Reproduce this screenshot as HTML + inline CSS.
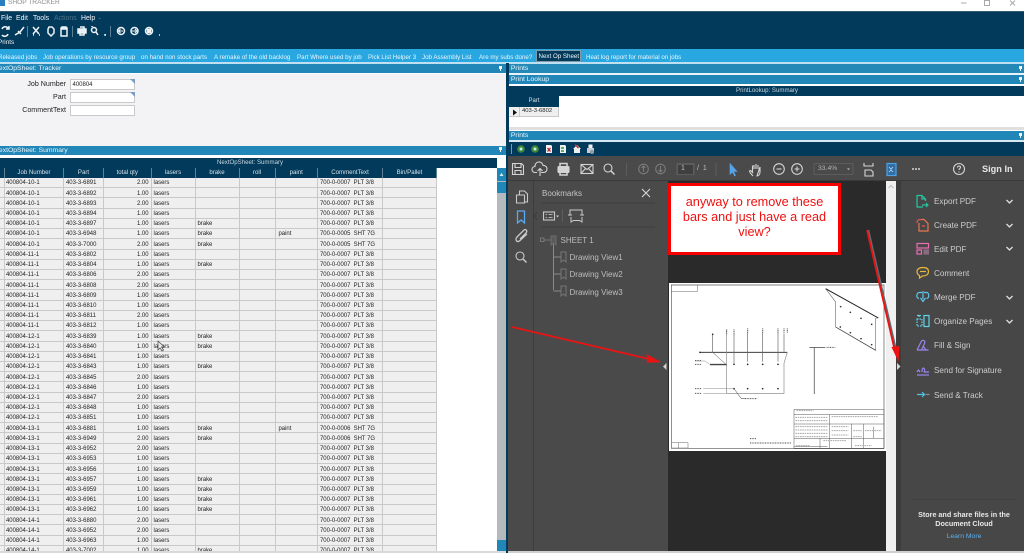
<!DOCTYPE html>
<html><head><meta charset="utf-8"><title>Shop Tracker</title>
<style>
html,body{margin:0;padding:0;background:#fff}
body{width:1024px;height:553px;overflow:hidden;position:relative;font-family:"Liberation Sans",sans-serif;filter:blur(.3px)}
.a{position:absolute}
.t{position:absolute;white-space:nowrap;line-height:1}
.hd{position:absolute;height:9px;background:#2187b8;color:#eef6fa;font-size:6.8px;line-height:9px;white-space:nowrap;overflow:hidden}
.tab{position:absolute;top:53.5px;font-size:6.2px;line-height:7px;color:#eaf6fc;white-space:nowrap}
.menu{position:absolute;top:14.5px;font-size:6.9px;line-height:8px;color:#f2f6f9;white-space:nowrap}
.th{position:absolute;top:168px;height:9.5px;background:#023a5c;color:#d4e0e8;font-size:6.1px;line-height:10px;text-align:center;border-right:1px solid #5f8196;white-space:nowrap;overflow:hidden}
#grid{position:absolute;left:0;top:178px;width:437px;height:373px;overflow:hidden;background:#c9c9c9}
.r{display:flex;height:10.23px;box-sizing:border-box;border-bottom:1px solid #c9c9c9;font-size:5.95px;line-height:9.4px;color:#222}
.r i{font-style:normal;display:block;box-sizing:border-box;background:#efefef;border-right:1px solid #c9c9c9;white-space:nowrap;overflow:hidden;padding-left:2px;padding-top:1.4px;height:9.23px}
.r i:nth-child(1){width:5px;padding-left:0}
.r i:nth-child(2){width:59px;padding-left:1px}
.r i:nth-child(3){width:40px;padding-left:2px}
.r i:nth-child(4){width:47.5px;text-align:right;padding-right:2px}
.r i:nth-child(5){width:44px}
.r i:nth-child(6){width:44px}
.r i:nth-child(7){width:36px}
.r i:nth-child(8){width:42.5px;padding-left:3px}
.r i:nth-child(9){width:65px;padding-left:2px}
.r i:nth-child(10){width:54px}
.tr{position:absolute;left:934px;font-size:8.15px;line-height:10px;color:#cdcdcd;white-space:nowrap}
.bm{position:absolute;font-size:8px;line-height:10px;color:#bdbdbd;white-space:nowrap}
</style></head>
<body>
<!-- title bar -->
<div class="a" style="left:0;top:0;width:1024px;height:11px;background:#fff"></div>
<div class="a" style="left:0;top:0;width:5px;height:6px;background:#2a7fc0"></div>
<div class="t" style="left:8px;top:0;font-size:6.6px;color:#8c8c8c">SHOP TRACKER</div>
<svg class="a" style="left:955px;top:0" width="69" height="8" fill="none" stroke="#a8a8a8"><path d="M6 3h5.500"/><rect x="29.500" y=".5" width="5" height="5"/><path d="M55 .5l5 5M60 .5l-5 5"/></svg>
<!-- dark ribbon -->
<div class="a" style="left:0;top:11px;width:1024px;height:38px;background:#023a5c;border-top:1px solid #33586f;box-sizing:border-box"></div>
<div class="menu" style="left:1px">File</div>
<div class="menu" style="left:16px">Edit</div>
<div class="menu" style="left:33px">Tools</div>
<div class="menu" style="left:54px;color:#4f7389">Actions</div>
<div class="menu" style="left:81px">Help</div>
<div class="t" style="left:99px;top:15px;font-size:6px;color:#e6eef3">.</div>
<svg class="a" style="left:0;top:25px" width="170" height="14" fill="none" stroke="#eef3f6" stroke-width="1.500">
<path d="M2 4a3.500 3.500 0 0 1 6-1l1 1M8 9a3.500 3.500 0 0 1-6 1M9 1v3H6"/>
<path d="M15 10l5-3 4-5M18 6l3 3" />
<path d="M27.500 1v11" stroke="#5e7f94" stroke-width="1"/>
<path d="M33 2l6 7M39 2l-6 7M33 10h1M39 10h1"/>
<path d="M49 2h3l2 2v4l-3 3-3-3V4z"/>
<rect x="61" y="3" width="6" height="8"/><path d="M62 2h4v2h-4z"/>
<path d="M72.500 1v11" stroke="#5e7f94" stroke-width="1"/>
<rect x="78" y="4" width="8" height="4" fill="#e8eef2"/><path d="M80 2h4v2M80 8v2h4V8"/>
<circle cx="94" cy="5" r="2.500"/><path d="M96 7l2 3M92 2v-1"/>
<path d="M105 9v1h1" />
<path d="M110.500 1v11" stroke="#5e7f94" stroke-width="1"/>
<circle cx="121" cy="6" r="3.500"/><path d="M123 6h-4M120.500 4l-2 2 2 2" stroke-width="1"/>
<circle cx="134.500" cy="6" r="3.500"/><path d="M132 6h4M135 4l2 2-2 2" stroke-width="1"/>
<circle cx="149" cy="6" r="3.500"/><rect x="147.500" y="4.500" width="3" height="3" fill="#e8eef2"/>
<path d="M159 10h1"/>
</svg>
<div class="t" style="left:-2px;top:40px;font-size:6.3px;color:#eef3f6">Prints</div>
<!-- tabs -->
<div class="a" style="left:0;top:49px;width:1024px;height:13px;background:#28a7e1"></div>
<div class="a" style="left:0;top:62px;width:1024px;height:1.500px;background:#bfe0f0"></div>
<div class="tab" style="left:-2px">Released jobs</div>
<div class="tab" style="left:43px">Job operations by resource group</div>
<div class="tab" style="left:141px">on hand non stock parts</div>
<div class="tab" style="left:214px">A remake of the old backlog</div>
<div class="tab" style="left:297px">Part Where used by job</div>
<div class="tab" style="left:368px">Pick List Helper 3</div>
<div class="tab" style="left:422px">Job Assembly List</div>
<div class="tab" style="left:479px">Are my subs done?</div>
<div class="a" style="left:536px;top:50px;width:45px;height:12px;background:#023a5c;border:1px solid #7f9aab;box-sizing:border-box"></div>
<div class="tab" style="left:538.500px;top:52.500px;color:#f0f5f8">Next Op Sheet</div>
<div class="tab" style="left:586px">Heat log report for material on jobs</div>
<!-- left panels -->
<div class="hd" style="left:0;top:64px;width:506px"><span style="margin-left:-6px">NextOpSheet: Tracker</span></div>
<div class="a" style="left:0;top:74px;width:506px;height:72px;background:#f3f3f6"></div>
<div class="t" style="right:958px;top:81px;font-size:7.100px;color:#222">Job Number</div>
<div class="t" style="right:958px;top:94px;font-size:7.100px;color:#222">Part</div>
<div class="t" style="right:958px;top:106.500px;font-size:7.100px;color:#222">CommentText</div>
<div class="a" style="left:70px;top:79px;width:65px;height:11px;background:#fff;border:1px solid #c9c9c9;box-sizing:border-box"></div>
<div class="a" style="left:70px;top:92px;width:65px;height:11px;background:#fff;border:1px solid #c9c9c9;box-sizing:border-box"></div>
<div class="a" style="left:70px;top:105px;width:65px;height:11px;background:#fff;border:1px solid #c9c9c9;box-sizing:border-box"></div>
<svg class="a" style="left:129px;top:79px" width="6" height="24"><path d="M1 0h5v5zM1 13h5v5z" fill="#7d9cc4"/></svg>
<div class="t" style="left:72.500px;top:81.500px;font-size:6px;color:#222">400804</div>
<div class="hd" style="left:0;top:146px;width:506px"><span style="margin-left:-6px">NextOpSheet: Summary</span></div>
<div class="a" style="left:0;top:155px;width:506px;height:3px;background:#fff"></div>
<div class="a" style="left:0;top:158px;width:497px;height:10px;background:#023a5c"></div>
<div class="t" style="left:217px;top:160px;font-size:6.100px;color:#c8d6de">NextOpSheet: Summary</div>
<div class="a" style="left:437px;top:168px;width:60px;height:383px;background:#fff"></div>
<div class="th" style="left:0;width:4px"></div>
<div class="th" style="left:5px;width:58px">Job Number</div>
<div class="th" style="left:64px;width:39px">Part</div>
<div class="th" style="left:104px;width:46.500px">total qty</div>
<div class="th" style="left:151.500px;width:43px">lasers</div>
<div class="th" style="left:195.500px;width:43px">brake</div>
<div class="th" style="left:239.500px;width:35px">roll</div>
<div class="th" style="left:275.500px;width:41.500px">paint</div>
<div class="th" style="left:318px;width:64px">CommentText</div>
<div class="th" style="left:383px;width:53px">Bin/Pallet</div>
<div id="grid">
<div class="r"><i></i><i>400804-10-1</i><i>403-3-6891</i><i>2.00</i><i>lasers</i><i></i><i></i><i></i><i>700-0-0007 &nbsp;PLT 3/8</i><i></i></div>
<div class="r"><i></i><i>400804-10-1</i><i>403-3-6892</i><i>1.00</i><i>lasers</i><i></i><i></i><i></i><i>700-0-0007 &nbsp;PLT 3/8</i><i></i></div>
<div class="r"><i></i><i>400804-10-1</i><i>403-3-6893</i><i>2.00</i><i>lasers</i><i></i><i></i><i></i><i>700-0-0007 &nbsp;PLT 3/8</i><i></i></div>
<div class="r"><i></i><i>400804-10-1</i><i>403-3-6894</i><i>1.00</i><i>lasers</i><i></i><i></i><i></i><i>700-0-0007 &nbsp;PLT 3/8</i><i></i></div>
<div class="r"><i></i><i>400804-10-1</i><i>403-3-6897</i><i>1.00</i><i>lasers</i><i>brake</i><i></i><i></i><i>700-0-0007 &nbsp;PLT 3/8</i><i></i></div>
<div class="r"><i></i><i>400804-10-1</i><i>403-3-6948</i><i>1.00</i><i>lasers</i><i>brake</i><i></i><i>paint</i><i>700-0-0005 &nbsp;SHT 7G</i><i></i></div>
<div class="r"><i></i><i>400804-10-1</i><i>403-3-7000</i><i>2.00</i><i>lasers</i><i>brake</i><i></i><i></i><i>700-0-0005 &nbsp;SHT 7G</i><i></i></div>
<div class="r"><i></i><i>400804-11-1</i><i>403-3-6802</i><i>1.00</i><i>lasers</i><i></i><i></i><i></i><i>700-0-0007 &nbsp;PLT 3/8</i><i></i></div>
<div class="r"><i></i><i>400804-11-1</i><i>403-3-6804</i><i>1.00</i><i>lasers</i><i>brake</i><i></i><i></i><i>700-0-0007 &nbsp;PLT 3/8</i><i></i></div>
<div class="r"><i></i><i>400804-11-1</i><i>403-3-6806</i><i>2.00</i><i>lasers</i><i></i><i></i><i></i><i>700-0-0007 &nbsp;PLT 3/8</i><i></i></div>
<div class="r"><i></i><i>400804-11-1</i><i>403-3-6808</i><i>2.00</i><i>lasers</i><i></i><i></i><i></i><i>700-0-0007 &nbsp;PLT 3/8</i><i></i></div>
<div class="r"><i></i><i>400804-11-1</i><i>403-3-6809</i><i>1.00</i><i>lasers</i><i></i><i></i><i></i><i>700-0-0007 &nbsp;PLT 3/8</i><i></i></div>
<div class="r"><i></i><i>400804-11-1</i><i>403-3-6810</i><i>1.00</i><i>lasers</i><i></i><i></i><i></i><i>700-0-0007 &nbsp;PLT 3/8</i><i></i></div>
<div class="r"><i></i><i>400804-11-1</i><i>403-3-6811</i><i>2.00</i><i>lasers</i><i></i><i></i><i></i><i>700-0-0007 &nbsp;PLT 3/8</i><i></i></div>
<div class="r"><i></i><i>400804-11-1</i><i>403-3-6812</i><i>1.00</i><i>lasers</i><i></i><i></i><i></i><i>700-0-0007 &nbsp;PLT 3/8</i><i></i></div>
<div class="r"><i></i><i>400804-12-1</i><i>403-3-6839</i><i>1.00</i><i>lasers</i><i>brake</i><i></i><i></i><i>700-0-0007 &nbsp;PLT 3/8</i><i></i></div>
<div class="r"><i></i><i>400804-12-1</i><i>403-3-6840</i><i>1.00</i><i>lasers</i><i>brake</i><i></i><i></i><i>700-0-0007 &nbsp;PLT 3/8</i><i></i></div>
<div class="r"><i></i><i>400804-12-1</i><i>403-3-6841</i><i>1.00</i><i>lasers</i><i></i><i></i><i></i><i>700-0-0007 &nbsp;PLT 3/8</i><i></i></div>
<div class="r"><i></i><i>400804-12-1</i><i>403-3-6843</i><i>1.00</i><i>lasers</i><i>brake</i><i></i><i></i><i>700-0-0007 &nbsp;PLT 3/8</i><i></i></div>
<div class="r"><i></i><i>400804-12-1</i><i>403-3-6845</i><i>2.00</i><i>lasers</i><i></i><i></i><i></i><i>700-0-0007 &nbsp;PLT 3/8</i><i></i></div>
<div class="r"><i></i><i>400804-12-1</i><i>403-3-6846</i><i>1.00</i><i>lasers</i><i></i><i></i><i></i><i>700-0-0007 &nbsp;PLT 3/8</i><i></i></div>
<div class="r"><i></i><i>400804-12-1</i><i>403-3-6847</i><i>2.00</i><i>lasers</i><i></i><i></i><i></i><i>700-0-0007 &nbsp;PLT 3/8</i><i></i></div>
<div class="r"><i></i><i>400804-12-1</i><i>403-3-6848</i><i>1.00</i><i>lasers</i><i></i><i></i><i></i><i>700-0-0007 &nbsp;PLT 3/8</i><i></i></div>
<div class="r"><i></i><i>400804-12-1</i><i>403-3-6851</i><i>1.00</i><i>lasers</i><i></i><i></i><i></i><i>700-0-0007 &nbsp;PLT 3/8</i><i></i></div>
<div class="r"><i></i><i>400804-13-1</i><i>403-3-6881</i><i>1.00</i><i>lasers</i><i>brake</i><i></i><i>paint</i><i>700-0-0006 &nbsp;SHT 7G</i><i></i></div>
<div class="r"><i></i><i>400804-13-1</i><i>403-3-6949</i><i>2.00</i><i>lasers</i><i>brake</i><i></i><i></i><i>700-0-0006 &nbsp;SHT 7G</i><i></i></div>
<div class="r"><i></i><i>400804-13-1</i><i>403-3-6952</i><i>2.00</i><i>lasers</i><i></i><i></i><i></i><i>700-0-0007 &nbsp;PLT 3/8</i><i></i></div>
<div class="r"><i></i><i>400804-13-1</i><i>403-3-6953</i><i>1.00</i><i>lasers</i><i></i><i></i><i></i><i>700-0-0007 &nbsp;PLT 3/8</i><i></i></div>
<div class="r"><i></i><i>400804-13-1</i><i>403-3-6956</i><i>1.00</i><i>lasers</i><i></i><i></i><i></i><i>700-0-0007 &nbsp;PLT 3/8</i><i></i></div>
<div class="r"><i></i><i>400804-13-1</i><i>403-3-6957</i><i>1.00</i><i>lasers</i><i>brake</i><i></i><i></i><i>700-0-0007 &nbsp;PLT 3/8</i><i></i></div>
<div class="r"><i></i><i>400804-13-1</i><i>403-3-6959</i><i>1.00</i><i>lasers</i><i>brake</i><i></i><i></i><i>700-0-0007 &nbsp;PLT 3/8</i><i></i></div>
<div class="r"><i></i><i>400804-13-1</i><i>403-3-6961</i><i>1.00</i><i>lasers</i><i>brake</i><i></i><i></i><i>700-0-0007 &nbsp;PLT 3/8</i><i></i></div>
<div class="r"><i></i><i>400804-13-1</i><i>403-3-6962</i><i>1.00</i><i>lasers</i><i>brake</i><i></i><i></i><i>700-0-0007 &nbsp;PLT 3/8</i><i></i></div>
<div class="r"><i></i><i>400804-14-1</i><i>403-3-6880</i><i>2.00</i><i>lasers</i><i></i><i></i><i></i><i>700-0-0007 &nbsp;PLT 3/8</i><i></i></div>
<div class="r"><i></i><i>400804-14-1</i><i>403-3-6952</i><i>2.00</i><i>lasers</i><i></i><i></i><i></i><i>700-0-0007 &nbsp;PLT 3/8</i><i></i></div>
<div class="r"><i></i><i>400804-14-1</i><i>403-3-6963</i><i>1.00</i><i>lasers</i><i></i><i></i><i></i><i>700-0-0007 &nbsp;PLT 3/8</i><i></i></div>
<div class="r"><i></i><i>400804-14-1</i><i>403-3-7002</i><i>1.00</i><i>lasers</i><i>brake</i><i></i><i></i><i>700-0-0007 &nbsp;PLT 3/8</i><i></i></div>
</div>
<!-- cursor -->
<svg class="a" style="left:157px;top:340px" width="9" height="13"><path d="M1 1v9l2-2 2 3 1.500-1-2-3h3z" fill="#e8e8e8" stroke="#444" stroke-width=".7"/></svg>
<!-- scrollbar -->
<div class="a" style="left:497px;top:168px;width:9px;height:383px;background:#b3b9bc"></div>
<div class="a" style="left:497px;top:168px;width:9px;height:13px;background:#2187b8"></div>
<div class="a" style="left:497px;top:182px;width:9px;height:11px;background:#2187b8"></div>
<div class="a" style="left:497px;top:540px;width:9px;height:11px;background:#2187b8"></div>
<svg class="a" style="left:497px;top:170px" width="9" height="8"><path d="M2.500 6l2-3 2 3z" fill="#dcebf3"/></svg>
<div class="a" style="left:0;top:551px;width:506px;height:2px;background:#d9d9d9"></div>
<!-- divider -->
<div class="a" style="left:506px;top:63px;width:3px;height:490px;background:#023a5c"></div>
<!-- right panels -->
<div class="hd" style="left:509px;top:64px;width:515px;background:#2589b8">&nbsp;Prints</div>
<div class="a" style="left:509px;top:73px;width:515px;height:2px;background:#e8f2f7"></div>
<div class="hd" style="left:509px;top:75px;width:515px">&nbsp;Print Lookup</div>
<div class="a" style="left:509px;top:84px;width:515px;height:2px;background:#fff"></div>
<div class="a" style="left:509px;top:86px;width:515px;height:10px;background:#023a5c"></div>
<div class="t" style="left:736px;top:88px;font-size:6.100px;color:#c8d6de">PrintLookup: Summary</div>
<div class="a" style="left:509px;top:96px;width:515px;height:31px;background:#fff"></div>
<div class="a" style="left:509px;top:96px;width:50px;height:11px;background:#023a5c;color:#d4e0e8;font-size:6px;line-height:11px;text-align:center">Part</div>
<div class="a" style="left:509px;top:107px;width:50px;height:10px;background:#efefef;border-right:1px solid #c9c9c9;border-bottom:1px solid #c9c9c9;box-sizing:border-box"></div>
<div class="a" style="left:519px;top:107px;width:1px;height:10px;background:#c9c9c9"></div>
<svg class="a" style="left:512px;top:109px" width="6" height="7"><path d="M1 .5l4 3-4 3z" fill="#111"/></svg>
<div class="t" style="left:522px;top:109px;font-size:5.900px;color:#222">403-3-6802</div>
<div class="a" style="left:509px;top:127px;width:515px;height:3px;background:#e2e0dc"></div>
<div class="hd" style="left:509px;top:131px;width:515px">&nbsp;Prints</div>
<div class="a" style="left:509px;top:140px;width:515px;height:2px;background:#d8e8f0"></div>
<div class="a" style="left:509px;top:142px;width:515px;height:14px;background:#023a5c"></div>
<svg class="a" style="left:1018px;top:65px" width="6" height="76" fill="#eef4f7"><path d="M1 1h3v3H3v2H2V4H1zM1 12h3v3H3v2H2v-2H1zM1 68h3v3H3v2H2v-2H1z"/></svg>
<svg class="a" style="left:496px;top:65px" width="9" height="90" fill="#eef4f7"><path d="M3 1h3v3H5v2H4V4H3zM3 82h3v3H5v2H4v-2H3z"/></svg>
<svg class="a" style="left:509px;top:143px" width="90" height="13">
<path d="M2.500 1v10" stroke="#7c98a8"/>
<circle cx="12" cy="6" r="3.800" fill="#3c8a3a"/><circle cx="12" cy="6" r="1.500" fill="#cfe6da"/>
<circle cx="26" cy="6" r="3.800" fill="#3c8a3a"/><circle cx="26" cy="6" r="1.500" fill="#cfe6da"/>
<path d="M37 2h5l1 1v7h-6z" fill="#f2f2f2"/><path d="M38.500 5l3 3.500M41.500 5l-3 3.500" stroke="#b5232a" stroke-width="1.300"/>
<path d="M51 2h5l1 1v7h-6z" fill="#eef2ee"/><path d="M52 5h3M55 8h-3" stroke="#2d9640" stroke-width="1.500"/>
<path d="M68 2l-4 4h1v4h6V6h1z" fill="#f0f0f0"/><path d="M66 1.500l3.500 3.500" stroke="#b5332a" stroke-width="1.400"/>
<rect x="78" y="5" width="7" height="5" fill="#c6ced4"/><rect x="79.500" y="1.500" width="4" height="3.500" fill="#eef1f3"/><circle cx="83" cy="9" r="2" fill="#8e9ba3"/>
</svg>
<!-- acrobat -->
<div class="a" style="left:508px;top:156px;width:516px;height:397px;background:#4a4a4a"></div>
<div class="a" style="left:508px;top:180px;width:516px;height:1px;background:#3a3a3a"></div>
<svg class="a" style="left:508px;top:156px" width="516" height="25" fill="none" stroke="#d4d4d4" stroke-width="1.100">
<path d="M4.500 7.500h9l2 2v9h-11zM7 7.500v4h6v-4M7 18.500v-4h6v4"/>
<path d="M29 16.500h-2a3 3 0 0 1 0-6 4 4 0 0 1 8-1 3.500 3.500 0 0 1 1 7h-3M32 20v-7M29.500 15l2.500-2.500 2.500 2.500"/>
<rect x="50" y="10.500" width="11" height="6" rx="1" fill="#d4d4d4"/><path d="M52 10V7.500h7V10M52 16v3h7v-3" stroke-width="1.500"/>
<rect x="73" y="8.500" width="12" height="9"/><path d="M73 8.500l6 5 6-5M73 17.500l4.500-5M85 17.500l-4.500-5"/>
<circle cx="100" cy="12" r="4"/><path d="M103 15l3.500 3.500" stroke-width="1.500"/>
<path d="M118.500 7v13" stroke="#5c5c5c"/>
<g stroke="#7b7b7b"><circle cx="135.500" cy="13" r="4.800"/><path d="M135.500 16v-6M133.500 12l2-2 2 2"/><circle cx="152.500" cy="13" r="4.800"/><path d="M152.500 10v6M150.500 14l2 2 2-2"/></g>
<rect x="169" y="7.500" width="17" height="11" fill="#3f3f3f" stroke="#5c5c5c"/>
<path d="M208 7v13" stroke="#5c5c5c"/>
<path d="M222 7.500v11l2.500-2.500 2 4 1-.5-2-4h3.500z" fill="#54a4ea" stroke="#54a4ea" stroke-width=".6"/>
<path d="M245 20c-2-2-3-3-3.500-5l1.200-.5 1.800 2V9.500M246 9v4M248 8v5M250 9v4M252 11v5c0 2-1 4-3 4z"/>
<circle cx="271" cy="13" r="5.300"/><path d="M268.500 13h5"/>
<circle cx="289" cy="13" r="5.300"/><path d="M286.500 13h5M289 10.500v5"/>
<rect x="306" y="7.500" width="39" height="11" rx="1" fill="#4a4a4a" stroke="#5c5c5c"/>
<path d="M339 12.500h3l-1.500 1.500z" fill="#ccc" stroke="none"/>
<path d="M356 7v3h9V7M357 20v-6h6l2 2v4zM360 19h0M363 19h0"/>
<rect x="379" y="7.500" width="9" height="12" fill="#2f6da3" stroke="#4ba3ea" stroke-width="1.200"/><path d="M381 11l2 2 2-2M381 16l2-2 2 2" stroke="#bcdcf5" stroke-width=".8"/>
<path d="M404 13h2M407 13h2M410 13h2" stroke-width="1.600"/>
<circle cx="451" cy="13" r="5.500"/><path d="M449.500 11.500c0-2 3-2 3 0 0 1-1.500 1-1.500 2.500M451 15.500v1"/>
</svg>
<div class="t" style="left:681px;top:165px;font-size:7px;color:#c0c0c0">1</div>
<div class="a" style="left:677px;top:163.500px;width:17px;height:11px;border:1px solid #5c5c5c;box-sizing:border-box"></div>
<div class="t" style="left:697px;top:165px;font-size:7px;color:#bdbdbd">/ &nbsp;1</div>
<div class="t" style="left:818px;top:165.500px;font-size:6.800px;color:#b5b5b5">33.4%</div>
<div class="t" style="left:982px;top:165px;font-size:9.200px;font-weight:bold;color:#e6e6e6">Sign In</div>
<!-- nav rail -->
<div class="a" style="left:533px;top:181px;width:1px;height:372px;background:#3d3d3d"></div>
<svg class="a" style="left:508px;top:181px" width="160" height="125" fill="none" stroke="#c9c9c9" stroke-width="1.100">
<path d="M8.500 14h3v-4h5l3 3v8h-3M8.500 14v8h8v-8z"/>
<path d="M9.500 30h7v12l-3.500-3-3.500 3z" stroke="#5aa9ee" stroke-width="1.300"/>
<path d="M19 53l-7 6.500c-3 3-5.500-1-3-3.500l6.500-6.500c2-2 4.500 0 2.500 2.500l-6 6" stroke-width="1.300"/>
<circle cx="12" cy="75" r="4"/><path d="M15 78l3.500 3.500" stroke-width="1.500"/>
<path d="M34 22h113M34 46h113" stroke="#3e3e3e"/>
<path d="M134 8l8 8M142 8l-8 8" stroke="#d6d6d6"/>
<path d="M29 31l-3 4 3 4" stroke="#3d3d3d"/>
<rect x="35.500" y="31" width="11" height="8" stroke-width="1.100"/><path d="M37.500 33.500h1.500M40.500 33.500h4M37.500 36.500h1.500M40.500 36.500h4" stroke-width=".8"/>
<path d="M48 34.500h3l-1.500 2z" fill="#c9c9c9" stroke="none"/>
<path d="M54.500 28v13" stroke="#5e5e5e"/>
<path d="M62 34v-5h12v5M60 34h4M72 34h4M63 36v5l2.500-1.500h6L74 41v-5" stroke-width="1"/>
</svg>
<div class="t" style="left:542px;top:190px;font-size:8px;color:#c4c4c4">Bookmarks</div>
<svg class="a" style="left:538px;top:232px" width="30" height="66" fill="none" stroke="#777" stroke-width="1">
<rect x="2.500" y="6" width="3.500" height="3.500"/><path d="M6 8h7"/><path d="M13 4h5v9l-2.500-2-2.500 2z" stroke="#6c6c6c" fill="#5b5b5b"/>
<path d="M15.500 12v46M15.500 25h8M15.500 42h8M15.500 59h8" stroke="#8a8a8a"/>
<path d="M23 20h5v10l-2.500-2-2.500 2zM23 37h5v10l-2.500-2-2.500 2zM23 54h5v10l-2.500-2-2.500 2z"/>
</svg>
<div class="bm" style="left:560.500px;top:236px">SHEET 1</div>
<div class="bm" style="left:569.500px;top:253px">Drawing View1</div>
<div class="bm" style="left:569.500px;top:270px">Drawing View2</div>
<div class="bm" style="left:569.500px;top:287.500px">Drawing View3</div>
<!-- doc area -->
<div class="a" style="left:668px;top:181px;width:218px;height:372px;background:#2a2a2a"></div>
<div class="a" style="left:886px;top:181px;width:10px;height:372px;background:#f0f0f0"></div>
<div class="a" style="left:896px;top:181px;width:5px;height:372px;background:#3c3c3c"></div>
<svg class="a" style="left:887px;top:183px" width="8" height="8"><path d="M1.500 5l2.500-2.500L6.500 5" fill="none" stroke="#bbb"/></svg>
<svg class="a" style="left:662px;top:362px" width="6" height="9"><path d="M4.500 1v7L1 4.500z" fill="#cfcfcf"/></svg>
<svg class="a" style="left:896px;top:362px" width="6" height="9"><path d="M1 1v7l3.500-3.500z" fill="#d8d8d8"/></svg>
<!-- callout -->
<div class="a" style="left:668px;top:183px;width:173px;height:72px;background:#fff;border:3px solid #f80000;box-sizing:border-box"></div>
<div class="a" style="left:668px;top:195px;width:173px;text-align:center;font-size:12.700px;line-height:15px;color:#f01010">anyway to remove these<br>bars and just have a read<br>view?</div>
<!-- drawing -->
<div class="a" style="left:669px;top:283px;width:217px;height:168px;background:#fff"></div>
<svg class="a" style="left:660px;top:280px" width="240" height="180" viewBox="0 0 720 540" fill="none" stroke="#444" stroke-width="1.500">
<path d="M34 15h638v490H34z" stroke-width="2" stroke="#555"/>
<path d="M34 35h78V16" stroke="#666"/>
<path d="M497 26l30 40v75l120 70V115l7-2z" stroke="#777" stroke-width="2"/><path d="M497 26l158 88" stroke="#222" stroke-width="3"/>
<path d="M527 141l120 70" stroke="#444" stroke-width="2"/>
<g fill="#333" stroke="none"><circle cx="542" cy="80" r="2.500"/><circle cx="571" cy="97" r="2.500"/><circle cx="603" cy="115" r="2.500"/><circle cx="635" cy="133" r="2.500"/><circle cx="541" cy="141" r="2.500"/><circle cx="571" cy="158" r="2.500"/><circle cx="603" cy="176" r="2.500"/><circle cx="635" cy="194" r="2.500"/></g>
<path d="M120 217h262" stroke="#222" stroke-width="2.500"/>
<path d="M158 217l42 38h-50" stroke="#555"/><path d="M150 253h50" stroke="#222" stroke-width="2.500"/>
<path d="M200 150v190h172V250l10-33" stroke="#888" stroke-width="2"/>
<path d="M158 165v52M222 160v90M263 155v90M308 155v90M354 155v90M372 160v55" stroke="#666" stroke-width="2"/>
<g fill="#222" stroke="none"><circle cx="222" cy="253" r="2.500"/><circle cx="263" cy="253" r="2.500"/><circle cx="308" cy="253" r="2.500"/><circle cx="354" cy="253" r="2.500"/><circle cx="222" cy="326" r="2.500"/><circle cx="263" cy="326" r="2.500"/><circle cx="308" cy="326" r="2.500"/><circle cx="354" cy="326" r="2.500"/><circle cx="120" cy="217" r="2.500"/><circle cx="158" cy="163" r="2.500"/></g>
<path d="M130 326h90M130 340h70M200 340h172" stroke="#888"/>
<path d="M222 326l22 30h12" stroke="#333"/>
<path d="M105 243h30l14 10" stroke="#888"/>
<g stroke="#555" stroke-width="3" stroke-dasharray="3 2"><path d="M200 148v16M222 148v16M263 145v14M308 145v14M354 145v14M372 145v14M382 145v14M105 242h18M105 253h18M105 326h18M105 340h18M255 356h36M500 202h26M270 476h18M270 489h125"/></g>
<path d="M448 202h48" stroke="#222" stroke-width="2"/><path d="M463 202v140" stroke="#777" stroke-width="3"/>
<path d="M402 388h270v118H402zM402 404h270M402 432h270M402 475h270M508 404v101M575 432v73M610 432v73M640 440v35M402 500h100M480 475v30" stroke="#555"/>
<g stroke="#aaa" stroke-width="3" stroke-dasharray="5 2"><path d="M406 412h98M406 422h98M406 440h98M406 450h98M406 460h98M406 470h98M515 410h140M515 440h50M515 452h50M515 465h50M580 452h25M615 452h50M580 470h25M408 497h40M490 482h70M585 497h50M410 392h50"/></g>
<path d="M36 488h20v16M36 504h48v-16H56" stroke="#666"/>
</svg>
<!-- arrows -->
<svg class="a" style="left:505px;top:225px" width="400" height="150">
<path d="M7 102L146 134.500" stroke="#e81414" stroke-width="1.800" fill="none"/>
<path d="M155 137l-13-7 1 4-1 3z" fill="#e81414" stroke="#e81414"/>
<path d="M362 5L389 122" stroke="#5d6a72" stroke-width="2.600" fill="none" transform="translate(1 0)"/>
<path d="M362 5L389 122" stroke="#ee1111" stroke-width="1.800" fill="none"/>
<path d="M393.500 137l-7-15 8-1z" fill="#ee1111"/>
</svg>
<!-- right pane -->
<div class="a" style="left:901px;top:181px;width:123px;height:372px;background:#474747"></div>
<div class="tr" style="top:197px">Export PDF</div>
<div class="tr" style="top:221px">Create PDF</div>
<div class="tr" style="top:244.500px">Edit PDF</div>
<div class="tr" style="top:269px">Comment</div>
<div class="tr" style="top:293px">Merge PDF</div>
<div class="tr" style="top:317px">Organize Pages</div>
<div class="tr" style="top:341px">Fill &amp; Sign</div>
<div class="tr" style="top:366px">Send for Signature</div>
<div class="tr" style="top:390.500px">Send &amp; Track</div>
<svg class="a" style="left:905px;top:190px" width="112" height="215" fill="none" stroke-width="1.200">
<g stroke="#e0e0e0" stroke-width="1.300"><path d="M101.500 10l3 3 3-3M101.500 34l3 3 3-3M101.500 57l3 3 3-3M101.500 106l3 3 3-3M101.500 130l3 3 3-3"/></g>
<path d="M18 17h-6V5.500h5l3.500 3.500v2M17 5.500V9h3.500M17 15h6M21 13l2 2-2 2" stroke="#27c4a0"/>
<path d="M16 29.500h3l4 4v7.500h-9v-8" stroke="#e8764e"/><path d="M12 33c0-3 2-4 4-3M17 36h3" stroke="#e8564e"/>
<rect x="12" y="53.500" width="11.500" height="4.500" stroke="#e86fb0"/><rect x="12" y="60" width="4.500" height="4" stroke="#e86fb0"/><rect x="19" y="60" width="4.500" height="4" fill="#8a6a80" stroke="#8a6a80"/>
<path d="M18 77.500c-3.500 0-6 1.500-6 4s1 3 2.500 4v2.500l3-2c3.500 0 6-1.500 6-4.500s-2.500-4-5.500-4z" stroke="#e8b63c"/><path d="M15 81.500h6" stroke="#e8b63c"/>
<path d="M14 108.500c-3 0-3-6 .5-6H17M19 102.500h2.500c3 0 3 6 0 6M18 101v8M15.500 108l2.500 3.500 2.500-3.500" stroke="#5cc8ee"/>
<path d="M12 129v7h5v-7z" stroke="#63d0e6" stroke-dasharray="1.500 1"/>
<path d="M19 125.500h5v11h-5z" stroke="#63d0e6"/><path d="M12 125.500h4M14 127v-2" stroke="#63d0e6"/>
<path d="M12 160l4-8c1.500-3 5-1.500 3.500 1.500l-3 6.500M12 160h11.500M18 156l3 4" stroke="#9a86ec"/>
<path d="M12 185h12" stroke="#9a86ec"/><path d="M12 182l1.500-2 1.500 2M17 182c0-4 1.500-5 2.500-3s-1.500 3 0 3h4.500" stroke="#9a86ec"/>
<path d="M12 204.500h7M17 202l2.500 2.500-2.500 2.500" stroke="#4fc4e6"/><path d="M20.500 204.500h4" stroke="#8d8d8d"/>
</svg>
<div class="a" style="left:911px;top:499px;width:106px;height:1px;background:#3f3f3f"></div>
<div class="a" style="left:905px;top:511px;width:118px;text-align:center;font-size:7.200px;line-height:8.500px;font-weight:bold;color:#e8e8e8">Store and share files in the<br>Document Cloud</div>
<div class="a" style="left:905px;top:533px;width:118px;text-align:center;font-size:6.800px;line-height:8px;color:#5cb0ee">Learn More</div>
<div class="a" style="left:508px;top:551px;width:516px;height:2px;background:#cfcfcf"></div>
</body></html>
